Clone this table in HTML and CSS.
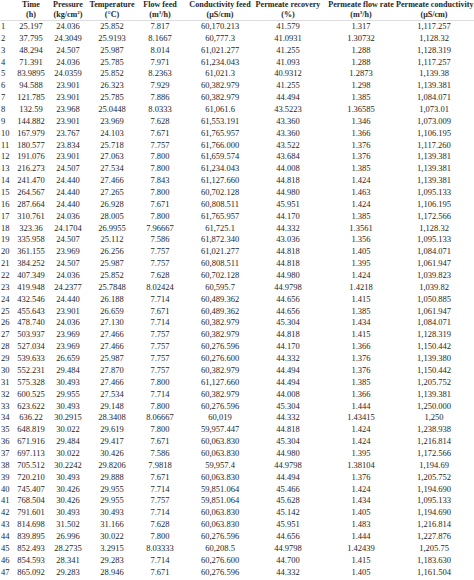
FILE: index.html
```html
<!DOCTYPE html>
<html>
<head>
<meta charset="utf-8">
<link rel="stylesheet" href="styles.css">
</head>
<body>
<div class="table">
  <div class="row head">
    <span></span>
    <span><div>Time</div><div>(h)</div></span>
    <span><div>Pressure</div><div>(kg/cm<sup>2</sup>)</div></span>
    <span><div>Temperature</div><div>(°C)</div></span>
    <span><div>Flow feed</div><div>(m<sup>3</sup>/h)</div></span>
    <span><div>Conductivity feed</div><div>(μS/cm)</div></span>
    <span><div>Permeate recovery</div><div>(%)</div></span>
    <span><div>Permeate flow rate</div><div>(m<sup>3</sup>/h)</div></span>
    <span><div class="overhang">Permeate conductivity</div><div>(μS/cm)</div></span>
  </div>
  <div class="row"><span>1</span><span>25.197</span><span>24.036</span><span>25.852</span><span>7.817</span><span>60,170.213</span><span>41.579</span><span>1.317</span><span>1,117.257</span></div>
  <div class="row"><span>2</span><span>37.795</span><span>24.3049</span><span>25.9193</span><span>8.1667</span><span>60,777.3</span><span>41.0931</span><span>1.30732</span><span>1,128.32</span></div>
  <div class="row"><span>3</span><span>48.294</span><span>24.507</span><span>25.987</span><span>8.014</span><span>61,021.277</span><span>41.255</span><span>1.288</span><span>1,128.319</span></div>
  <div class="row"><span>4</span><span>71.391</span><span>24.036</span><span>25.785</span><span>7.971</span><span>61,234.043</span><span>41.093</span><span>1.288</span><span>1,117.257</span></div>
  <div class="row"><span>5</span><span>83.9895</span><span>24.0359</span><span>25.852</span><span>8.2363</span><span>61,021.3</span><span>40.9312</span><span>1.2873</span><span>1,139.38</span></div>
  <div class="row"><span>6</span><span>94.588</span><span>23.901</span><span>26.323</span><span>7.929</span><span>60,382.979</span><span>41.255</span><span>1.298</span><span>1,139.381</span></div>
  <div class="row"><span>7</span><span>121.785</span><span>23.901</span><span>25.785</span><span>7.886</span><span>60,382.979</span><span>44.494</span><span>1.385</span><span>1,084.071</span></div>
  <div class="row"><span>8</span><span>132.59</span><span>23.968</span><span>25.0448</span><span>8.0333</span><span>61,061.6</span><span>43.5223</span><span>1.36585</span><span>1,073.01</span></div>
  <div class="row"><span>9</span><span>144.882</span><span>23.901</span><span>23.969</span><span>7.628</span><span>61,553.191</span><span>43.360</span><span>1.346</span><span>1,073.009</span></div>
  <div class="row"><span>10</span><span>167.979</span><span>23.767</span><span>24.103</span><span>7.671</span><span>61,765.957</span><span>43.360</span><span>1.366</span><span>1,106.195</span></div>
  <div class="row"><span>11</span><span>180.577</span><span>23.834</span><span>25.718</span><span>7.757</span><span>61,766.000</span><span>43.522</span><span>1.376</span><span>1,117.260</span></div>
  <div class="row"><span>12</span><span>191.076</span><span>23.901</span><span>27.063</span><span>7.800</span><span>61,659.574</span><span>43.684</span><span>1.376</span><span>1,139.381</span></div>
  <div class="row"><span>13</span><span>216.273</span><span>24.507</span><span>27.534</span><span>7.800</span><span>61,234.043</span><span>44.008</span><span>1.385</span><span>1,139.381</span></div>
  <div class="row"><span>14</span><span>241.470</span><span>24.440</span><span>27.466</span><span>7.843</span><span>61,127.660</span><span>44.818</span><span>1.424</span><span>1,139.381</span></div>
  <div class="row"><span>15</span><span>264.567</span><span>24.440</span><span>27.265</span><span>7.800</span><span>60,702.128</span><span>44.980</span><span>1.463</span><span>1,095.133</span></div>
  <div class="row"><span>16</span><span>287.664</span><span>24.440</span><span>26.928</span><span>7.671</span><span>60,808.511</span><span>45.951</span><span>1.424</span><span>1,106.195</span></div>
  <div class="row"><span>17</span><span>310.761</span><span>24.036</span><span>28.005</span><span>7.800</span><span>61,765.957</span><span>44.170</span><span>1.385</span><span>1,172.566</span></div>
  <div class="row"><span>18</span><span>323.36</span><span>24.1704</span><span>26.9955</span><span>7.96667</span><span>61,725.1</span><span>44.332</span><span>1.3561</span><span>1,128.32</span></div>
  <div class="row"><span>19</span><span>335.958</span><span>24.507</span><span>25.112</span><span>7.586</span><span>61,872.340</span><span>43.036</span><span>1.356</span><span>1,095.133</span></div>
  <div class="row"><span>20</span><span>361.155</span><span>23.969</span><span>26.256</span><span>7.757</span><span>61,021.277</span><span>44.818</span><span>1.405</span><span>1,084.071</span></div>
  <div class="row"><span>21</span><span>384.252</span><span>24.507</span><span>25.987</span><span>7.757</span><span>60,808.511</span><span>44.818</span><span>1.395</span><span>1,061.947</span></div>
  <div class="row"><span>22</span><span>407.349</span><span>24.036</span><span>25.852</span><span>7.628</span><span>60,702.128</span><span>44.980</span><span>1.424</span><span>1,039.823</span></div>
  <div class="row"><span>23</span><span>419.948</span><span>24.2377</span><span>25.7848</span><span>8.02424</span><span>60,595.7</span><span>44.9798</span><span>1.4218</span><span>1,039.82</span></div>
  <div class="row"><span>24</span><span>432.546</span><span>24.440</span><span>26.188</span><span>7.714</span><span>60,489.362</span><span>44.656</span><span>1.415</span><span>1,050.885</span></div>
  <div class="row"><span>25</span><span>455.643</span><span>23.901</span><span>26.659</span><span>7.671</span><span>60,489.362</span><span>44.656</span><span>1.385</span><span>1,061.947</span></div>
  <div class="row"><span>26</span><span>478.740</span><span>24.036</span><span>27.130</span><span>7.714</span><span>60,382.979</span><span>45.304</span><span>1.434</span><span>1,084.071</span></div>
  <div class="row"><span>27</span><span>503.937</span><span>23.969</span><span>27.466</span><span>7.757</span><span>60,382.979</span><span>44.818</span><span>1.415</span><span>1,128.319</span></div>
  <div class="row"><span>28</span><span>527.034</span><span>23.969</span><span>27.466</span><span>7.757</span><span>60,276.596</span><span>44.170</span><span>1.366</span><span>1,150.442</span></div>
  <div class="row"><span>29</span><span>539.633</span><span>26.659</span><span>25.987</span><span>7.757</span><span>60,276.600</span><span>44.332</span><span>1.376</span><span>1,139.380</span></div>
  <div class="row"><span>30</span><span>552.231</span><span>29.484</span><span>27.870</span><span>7.757</span><span>60,382.979</span><span>44.494</span><span>1.376</span><span>1,150.442</span></div>
  <div class="row"><span>31</span><span>575.328</span><span>30.493</span><span>27.466</span><span>7.800</span><span>61,127.660</span><span>44.494</span><span>1.385</span><span>1,205.752</span></div>
  <div class="row"><span>32</span><span>600.525</span><span>29.955</span><span>27.534</span><span>7.714</span><span>60,382.979</span><span>44.008</span><span>1.366</span><span>1,139.381</span></div>
  <div class="row"><span>33</span><span>623.622</span><span>30.493</span><span>29.148</span><span>7.800</span><span>60,276.596</span><span>45.304</span><span>1.444</span><span>1,250.000</span></div>
  <div class="row"><span>34</span><span>636.22</span><span>30.2915</span><span>28.3408</span><span>8.06667</span><span>60,019</span><span>44.332</span><span>1.43415</span><span>1,250</span></div>
  <div class="row"><span>35</span><span>648.819</span><span>30.022</span><span>29.619</span><span>7.800</span><span>59,957.447</span><span>44.818</span><span>1.424</span><span>1,238.938</span></div>
  <div class="row"><span>36</span><span>671.916</span><span>29.484</span><span>29.417</span><span>7.671</span><span>60,063.830</span><span>45.304</span><span>1.424</span><span>1,216.814</span></div>
  <div class="row"><span>37</span><span>697.113</span><span>30.022</span><span>30.426</span><span>7.586</span><span>60,063.830</span><span>44.980</span><span>1.395</span><span>1,172.566</span></div>
  <div class="row"><span>38</span><span>705.512</span><span>30.2242</span><span>29.8206</span><span>7.9818</span><span>59,957.4</span><span>44.9798</span><span>1.38104</span><span>1,194.69</span></div>
  <div class="row"><span>39</span><span>720.210</span><span>30.493</span><span>29.888</span><span>7.671</span><span>60,063.830</span><span>44.494</span><span>1.376</span><span>1,205.752</span></div>
  <div class="row"><span>40</span><span>745.407</span><span>30.426</span><span>29.955</span><span>7.714</span><span>59,851.064</span><span>45.466</span><span>1.424</span><span>1,194.690</span></div>
  <div class="row"><span>41</span><span>768.504</span><span>30.426</span><span>29.955</span><span>7.757</span><span>59,851.064</span><span>45.628</span><span>1.434</span><span>1,095.133</span></div>
  <div class="row"><span>42</span><span>791.601</span><span>30.493</span><span>30.493</span><span>7.714</span><span>60,063.830</span><span>45.142</span><span>1.405</span><span>1,194.690</span></div>
  <div class="row"><span>43</span><span>814.698</span><span>31.502</span><span>31.166</span><span>7.628</span><span>60,063.830</span><span>45.951</span><span>1.483</span><span>1,216.814</span></div>
  <div class="row"><span>44</span><span>839.895</span><span>26.996</span><span>30.022</span><span>7.800</span><span>60,276.596</span><span>44.656</span><span>1.444</span><span>1,227.876</span></div>
  <div class="row"><span>45</span><span>852.493</span><span>28.2735</span><span>3.2915</span><span>8.03333</span><span>60,208.5</span><span>44.9798</span><span>1.42439</span><span>1,205.75</span></div>
  <div class="row"><span>46</span><span>854.593</span><span>28.341</span><span>29.283</span><span>7.714</span><span>60,276.600</span><span>44.700</span><span>1.415</span><span>1,183.630</span></div>
  <div class="row"><span>47</span><span>865.092</span><span>29.283</span><span>28.946</span><span>7.671</span><span>60,276.596</span><span>44.332</span><span>1.405</span><span>1,161.504</span></div>
</div>
</body>
</html>
```
FILE: styles.css
```css
html, body {
  margin: 0;
  padding: 0;
  background: #ffffff;
}
body {
  width: 474px;
  height: 580px;
  overflow: hidden;
  font-family: "Liberation Serif", "Times New Roman", serif;
  font-size: 8.5px;
  color: #262626;
}
.table {
  width: 474px;
}
.row {
  display: grid;
  grid-template-columns: 12px 38px 36px 52px 44px 76px 60px 86px 60px;
  height: 11.87px;
  line-height: 11.87px;
  white-space: nowrap;
}
.row > span {
  display: flex;
  justify-content: center;
}
.row > span:first-child {
  justify-content: flex-start;
  padding-left: 1px;
}
.head {
  height: 20px;
  line-height: 10px;
  font-size: 8.1px;
  font-weight: bold;
  border-bottom: 1px solid #dddddd;
}
.head > span {
  flex-direction: column;
  align-items: center;
}
.head sup {
  font-size: 5px;
  line-height: 0;
  vertical-align: 3px;
}
.head .overhang {
  align-self: flex-start;
  margin-left: -8px;
}
```
